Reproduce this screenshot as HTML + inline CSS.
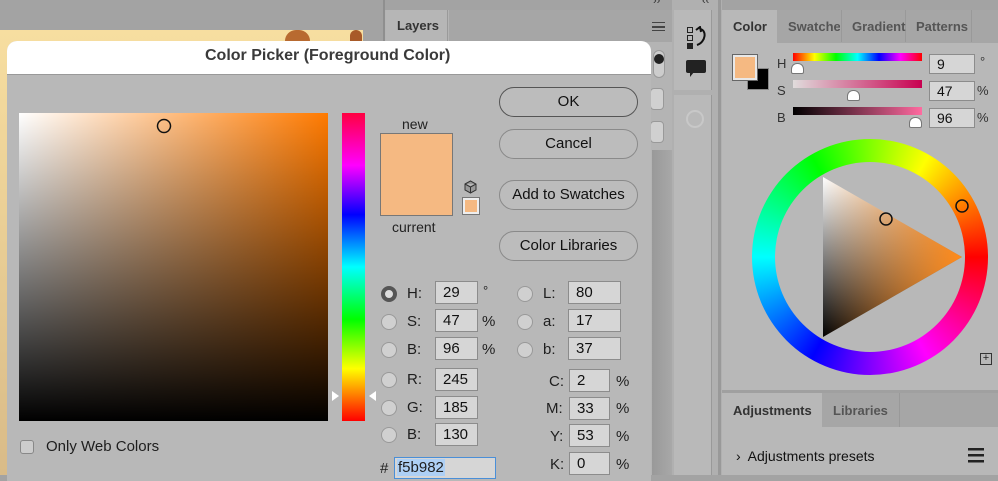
<!DOCTYPE html>
<html><head><meta charset="utf-8"><style>
*{box-sizing:border-box;margin:0;padding:0}
body{width:998px;height:475px;overflow:hidden;background:#a3a3a3;font-family:"Liberation Sans",Arial,sans-serif;position:relative}
.abs{position:absolute}
.t{position:absolute;color:#1e1e1e;font-size:15px;white-space:nowrap}
.fld{position:absolute;height:23px;background:#d6d6d6;border:1px solid #8c8c8c;font-size:15px;padding:2px 0 0 7px;color:#111}
.rad{position:absolute;width:16px;height:16px;border-radius:50%;background:#d0d0d0;border:1px solid #999}
.btn{position:absolute;left:499px;width:139px;height:30px;border:1px solid #8a8a8a;border-radius:15px;font-size:15px;text-align:center;line-height:28px;color:#111;background:#bcbcbc}
</style></head><body>
<div class="abs" style="left:0;top:30px;width:363px;height:445px;background:linear-gradient(180deg,#f7dea0,#d9bb88)"></div>
<div class="abs" style="left:285px;top:30px;width:25px;height:11px;background:#b86a30;border-radius:12px 12px 0 0"></div>
<div class="abs" style="left:350px;top:30px;width:12px;height:11px;background:#a85a28;border-radius:6px 6px 0 0"></div>
<div class="abs" style="left:383px;top:0;width:2px;height:475px;background:#8f8f8f"></div>
<div class="abs" style="left:385px;top:10px;width:287px;height:465px;background:#b4b4b4"></div>
<div class="abs" style="left:386px;top:10px;width:62px;height:32px;background:#b6b6b6;border-right:1px solid #9a9a9a"></div>
<div class="abs" style="left:449px;top:10px;width:223px;height:32px;background:#a6a6a6"></div>
<div class="t" style="left:397px;top:18px;font-size:13px;font-weight:bold;color:#333">Layers</div>
<div class="abs" style="left:652px;top:22px;width:13px;height:9px;border-top:1.5px solid #444;border-bottom:1.5px solid #444"></div>
<div class="abs" style="left:652px;top:26px;width:13px;height:1.5px;background:#444"></div>
<div class="abs" style="left:650px;top:88px;width:14px;height:22px;background:#d0d0d0;border:1px solid #999;border-radius:4px"></div>
<div class="abs" style="left:650px;top:121px;width:14px;height:22px;background:#d0d0d0;border:1px solid #999;border-radius:4px"></div>
<div class="abs" style="left:653px;top:50px;width:12px;height:28px;background:#ccc;border-radius:6px;border:1px solid #999"></div>
<div class="abs" style="left:654px;top:54px;width:10px;height:10px;border-radius:50%;background:#222"></div>
<div class="abs" style="left:652px;top:150px;width:20px;height:325px;background:linear-gradient(90deg,#999,#a8a8a8)"></div>
<div class="abs" style="left:672px;top:0;width:50px;height:475px;background:#b0b0b0"></div>
<div class="abs" style="left:674px;top:10px;width:38px;height:80px;background:#b9b9b9;border-right:1px solid #999"></div>
<div class="abs" style="left:674px;top:95px;width:38px;height:380px;background:#b9b9b9;border-right:1px solid #999"></div>
<div class="abs" style="left:718px;top:0;width:3px;height:475px;background:#999"></div>
<div class="t" style="left:653px;top:-5px;font-size:11px;color:#333">››</div>
<div class="t" style="left:702px;top:-5px;font-size:11px;color:#333">‹‹</div>
<div class="abs" style="left:687px;top:27px;width:6px;height:6px;border:1px solid #222"></div>
<div class="abs" style="left:687px;top:35px;width:6px;height:6px;border:1px solid #222"></div>
<div class="abs" style="left:687px;top:43px;width:6px;height:6px;background:#222"></div>
<svg class="abs" style="left:694px;top:26px" width="14" height="22"><path d="M2 4 L6 1 L7 6 M6 3 C13 4 12 16 3 19" fill="none" stroke="#111" stroke-width="2"/></svg>
<div class="abs" style="left:686px;top:60px;width:20px;height:13px;background:#222;border-radius:2px"></div>
<div class="abs" style="left:690px;top:72px;width:0;height:0;border-left:4px solid #222;border-bottom:5px solid transparent"></div>
<div class="abs" style="left:686px;top:110px;width:18px;height:18px;border-radius:50%;border:2px solid #c8c8c8"></div>
<div class="abs" style="left:722px;top:10px;width:276px;height:380px;background:#b8b8b8"></div>
<div class="abs" style="left:722px;top:10px;width:276px;height:33px;background:#a6a6a6"></div>
<div class="abs" style="left:722px;top:10px;width:55px;height:33px;background:#b8b8b8"></div>
<div class="abs" style="left:841px;top:10px;width:1px;height:32px;background:#999"></div>
<div class="abs" style="left:905px;top:10px;width:1px;height:32px;background:#999"></div>
<div class="abs" style="left:971px;top:10px;width:1px;height:32px;background:#999"></div>
<div class="t" style="left:733px;top:19px;font-size:13px;font-weight:bold;color:#333">Color</div>
<div class="t" style="left:788px;top:19px;font-size:13px;font-weight:bold;color:#555;width:52px;overflow:hidden">Swatches</div>
<div class="t" style="left:852px;top:19px;font-size:13px;font-weight:bold;color:#555">Gradient</div>
<div class="t" style="left:916px;top:19px;font-size:13px;font-weight:bold;color:#555">Patterns</div>
<div class="abs" style="left:747px;top:68px;width:22px;height:22px;background:#000;border:1.5px solid #888"></div>
<div class="abs" style="left:733px;top:55px;width:24px;height:25px;background:#f5b982;border:2px solid #e8e8e8;outline:1px solid #666"></div>
<div class="t" style="left:777px;top:56px;font-size:13px;color:#333">H</div>
<div class="t" style="left:777px;top:83px;font-size:13px;color:#333">S</div>
<div class="t" style="left:777px;top:110px;font-size:13px;color:#333">B</div>
<div class="abs" style="left:793px;top:53px;width:129px;height:8px;background:linear-gradient(90deg,#f00,#ff0,#0f0,#0ff,#00f,#f0f,#f00)"></div>
<div class="abs" style="left:793px;top:80px;width:129px;height:8px;background:linear-gradient(90deg,#e0dcdc,#c80050)"></div>
<div class="abs" style="left:793px;top:107px;width:129px;height:8px;background:linear-gradient(90deg,#000,#ff6aa0)"></div>
<div class="abs" style="left:791px;top:63px;width:13px;height:11px;background:#fff;border-radius:6px 6px 2px 2px;border:1px solid #777"></div>
<div class="abs" style="left:847px;top:90px;width:13px;height:11px;background:#fff;border-radius:6px 6px 2px 2px;border:1px solid #777"></div>
<div class="abs" style="left:909px;top:117px;width:13px;height:11px;background:#fff;border-radius:6px 6px 2px 2px;border:1px solid #777"></div>
<div class="fld" style="left:929px;top:54px;width:46px;height:20px;font-size:14px;padding-top:1px">9</div>
<div class="fld" style="left:929px;top:81px;width:46px;height:20px;font-size:14px;padding-top:1px">47</div>
<div class="fld" style="left:929px;top:108px;width:46px;height:20px;font-size:14px;padding-top:1px">96</div>
<div class="t" style="left:980px;top:54px;font-size:13px;color:#333">°</div>
<div class="t" style="left:977px;top:83px;font-size:13px;color:#333">%</div>
<div class="t" style="left:977px;top:110px;font-size:13px;color:#333">%</div>
<div class="abs" style="left:752px;top:139px;width:236px;height:236px;border-radius:50%;background:conic-gradient(from 0deg,#80ff00,#ffff00 30deg,#ff8000 60deg,#ff0000 90deg,#ff0080 120deg,#ff00ff 150deg,#8000ff 180deg,#0000ff 210deg,#0080ff 240deg,#00ffff 270deg,#00ff80 300deg,#00ff00 330deg,#80ff00 360deg)"></div>
<div class="abs" style="left:775px;top:162px;width:190px;height:190px;border-radius:50%;background:#b8b8b8"></div>
<svg class="abs" style="left:0;top:0" width="998" height="475">
<defs>
<linearGradient id="gv" x1="0" y1="0" x2="0" y2="1"><stop offset="0" stop-color="#fff"/><stop offset="1" stop-color="#000"/></linearGradient>
<linearGradient id="gh" x1="0" y1="0" x2="1" y2="0"><stop offset="0" stop-color="#ff8a1a" stop-opacity="0"/><stop offset="1" stop-color="#ff8a1a" stop-opacity="1"/></linearGradient>
</defs>
<polygon points="823,177 962,257 823,337" fill="url(#gv)"/>
<polygon points="823,177 962,257 823,337" fill="url(#gh)"/>
<circle cx="886" cy="219" r="6" fill="none" stroke="#111" stroke-width="1.5"/>
<circle cx="962" cy="206" r="6" fill="none" stroke="#111" stroke-width="1.5"/>
</svg>
<div class="abs" style="left:980px;top:353px;width:12px;height:12px;border:1.5px solid #333;font-size:11px;line-height:9px;text-align:center;color:#222">+</div>
<div class="abs" style="left:722px;top:390px;width:276px;height:3px;background:#a0a0a0"></div>
<div class="abs" style="left:722px;top:393px;width:276px;height:34px;background:#a6a6a6"></div>
<div class="abs" style="left:722px;top:393px;width:100px;height:35px;background:#b8b8b8"></div>
<div class="abs" style="left:899px;top:393px;width:1px;height:34px;background:#999"></div>
<div class="abs" style="left:722px;top:427px;width:276px;height:48px;background:#b8b8b8"></div>
<div class="t" style="left:733px;top:403px;font-size:13px;font-weight:bold;color:#333">Adjustments</div>
<div class="t" style="left:833px;top:403px;font-size:13px;font-weight:bold;color:#555">Libraries</div>
<div class="t" style="left:736px;top:448px;font-size:14px;color:#111">›&nbsp; Adjustments presets</div>
<div class="abs" style="left:968px;top:448px;width:16px;height:16px;background:repeating-linear-gradient(180deg,#222 0 2.5px,transparent 2.5px 6px)"></div>
<div class="abs" style="left:7px;top:41px;width:644px;height:440px;background:#b8b8b8;border-radius:10px 10px 0 0;overflow:hidden">
 <div style="height:34px;background:#fff;border-bottom:1px solid #999"></div>
</div>
<div class="t" style="left:205px;top:47px;font-size:16px;font-weight:bold;color:#3a3a3a">Color Picker (Foreground Color)</div>
<div class="abs" style="left:19px;top:113px;width:309px;height:308px;background:linear-gradient(180deg,rgba(0,0,0,0),#000),linear-gradient(90deg,#fff,#ff7a00)"></div>
<svg class="abs" style="left:0;top:0" width="660" height="475">
<circle cx="164" cy="126" r="6.5" fill="none" stroke="#111" stroke-width="1.5"/>
<polygon points="332,391 339,396 332,401" fill="#fff"/>
<polygon points="376,391 369,396 376,401" fill="#fff"/>
<path d="M465 184 L470.5 181 L476 184 L476 190 L470.5 193 L465 190 Z M465 184 L470.5 187 L476 184 M470.5 187 L470.5 193" fill="#999" stroke="#333" stroke-width="1"/>
</svg>
<div class="abs" style="left:342px;top:113px;width:23px;height:308px;background:linear-gradient(180deg,#ff0040,#ff00ff 17%,#0000ff 33%,#00ffff 50%,#00ff00 67%,#ffff00 83%,#ff0000)"></div>
<div class="abs" style="left:20px;top:440px;width:14px;height:14px;border:1px solid #888;border-radius:3px;background:#ccc"></div>
<div class="t" style="left:46px;top:438px;font-size:15px">Only Web Colors</div>
<div class="t" style="left:402px;top:116px;font-size:14px;color:#222">new</div>
<div class="abs" style="left:380px;top:133px;width:73px;height:83px;background:#f5b982;border:1px solid #777"></div>
<div class="t" style="left:392px;top:219px;font-size:14px;color:#222">current</div>
<div class="abs" style="left:463px;top:198px;width:16px;height:16px;background:#f5b982;border:2px solid #eee;outline:1px solid #777"></div>
<div class="btn" style="top:87px;border-color:#555">OK</div>
<div class="btn" style="top:129px">Cancel</div>
<div class="btn" style="top:180px">Add to Swatches</div>
<div class="btn" style="top:231px">Color Libraries</div>
<div class="rad" style="left:381px;top:286px;background:#ddd;border:4px solid #555"></div>
<div class="rad" style="left:381px;top:314px"></div>
<div class="rad" style="left:381px;top:342px"></div>
<div class="rad" style="left:381px;top:372px"></div>
<div class="rad" style="left:381px;top:400px"></div>
<div class="rad" style="left:381px;top:427px"></div>
<div class="rad" style="left:517px;top:286px"></div>
<div class="rad" style="left:517px;top:314px"></div>
<div class="rad" style="left:517px;top:342px"></div>
<div class="t" style="left:407px;top:285px">H:</div>
<div class="t" style="left:407px;top:313px">S:</div>
<div class="t" style="left:407px;top:341px">B:</div>
<div class="t" style="left:407px;top:371px">R:</div>
<div class="t" style="left:407px;top:399px">G:</div>
<div class="t" style="left:407px;top:426px">B:</div>
<div class="fld" style="left:435px;top:281px;width:43px">29</div>
<div class="fld" style="left:435px;top:309px;width:43px">47</div>
<div class="fld" style="left:435px;top:337px;width:43px">96</div>
<div class="fld" style="left:435px;top:368px;width:43px">245</div>
<div class="fld" style="left:435px;top:396px;width:43px">185</div>
<div class="fld" style="left:435px;top:423px;width:43px">130</div>
<div class="t" style="left:483px;top:283px;font-size:13px">°</div>
<div class="t" style="left:482px;top:313px">%</div>
<div class="t" style="left:482px;top:341px">%</div>
<div class="t" style="left:543px;top:285px">L:</div>
<div class="t" style="left:543px;top:313px">a:</div>
<div class="t" style="left:543px;top:341px">b:</div>
<div class="fld" style="left:568px;top:281px;width:53px">80</div>
<div class="fld" style="left:568px;top:309px;width:53px">17</div>
<div class="fld" style="left:568px;top:337px;width:53px">37</div>
<div class="t" style="left:549px;top:373px">C:</div>
<div class="t" style="left:546px;top:400px">M:</div>
<div class="t" style="left:550px;top:428px">Y:</div>
<div class="t" style="left:550px;top:456px">K:</div>
<div class="fld" style="left:569px;top:369px;width:41px">2</div>
<div class="fld" style="left:569px;top:397px;width:41px">33</div>
<div class="fld" style="left:569px;top:424px;width:41px">53</div>
<div class="fld" style="left:569px;top:452px;width:41px">0</div>
<div class="t" style="left:616px;top:373px">%</div>
<div class="t" style="left:616px;top:400px">%</div>
<div class="t" style="left:616px;top:428px">%</div>
<div class="t" style="left:616px;top:456px">%</div>
<div class="t" style="left:380px;top:460px">#</div>
<div class="abs" style="left:394px;top:457px;width:102px;height:22px;background:#d6d6d6;border:1.5px solid #4a8fd8"></div>
<div class="t" style="left:397px;top:459px;background:#aed0f5;padding:0 1px">f5b982</div>
</body></html>
